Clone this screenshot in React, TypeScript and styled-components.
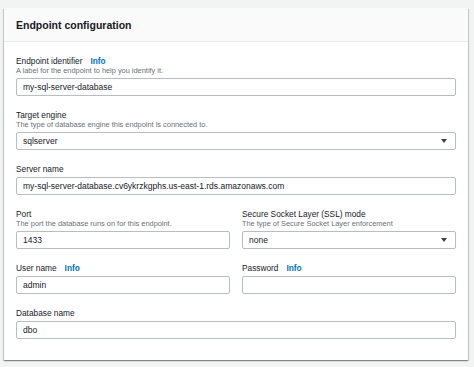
import React from "react";
import styled, { createGlobalStyle } from "styled-components";

const GlobalStyle = createGlobalStyle`
  html, body {
    margin: 0;
    padding: 0;
    background: #f2f3f3;
  }
  body {
    font-family: "Liberation Sans", Arial, sans-serif;
    color: #16191f;
  }
`;

const Page = styled.div`
  padding: 8px 6px 7px 4px;
  width: 474px;
  height: 367px;
  box-sizing: border-box;
`;

const Card = styled.section`
  background: #ffffff;
  box-shadow: 0 1px 1px 0 rgba(0, 28, 36, 0.3), 1px 1px 1px 0 rgba(0, 28, 36, 0.15),
    -1px 1px 1px 0 rgba(0, 28, 36, 0.15);
  height: 352px;
  display: flex;
  flex-direction: column;
`;

const CardHeader = styled.header`
  background: #fafafa;
  border-bottom: 1px solid #eaeded;
  height: 34px;
  box-sizing: border-box;
  padding: 0 12px;
  display: flex;
  align-items: center;
`;

const Title = styled.h2`
  margin: 0;
  font-size: 10.5px;
  font-weight: 700;
  color: #16191f;
`;

const CardBody = styled.div`
  padding: 14px 12px 0 12px;
  display: flex;
  flex-direction: column;
  gap: 14px;
`;

const Columns = styled.div`
  display: grid;
  grid-template-columns: 1fr 1fr;
  column-gap: 12px;
`;

const Field = styled.div`
  display: flex;
  flex-direction: column;
`;

const Label = styled.label`
  font-size: 8.3px;
  line-height: 10px;
  height: 10px;
  color: #16191f;
  display: flex;
  align-items: center;
`;

const InfoLink = styled.a`
  margin-left: 8px;
  font-weight: 700;
  color: #0073bb;
  text-decoration: none;
`;

const Description = styled.div`
  font-size: 7.4px;
  line-height: 9px;
  height: 9px;
  color: #687078;
`;

const InputBox = styled.div`
  margin-top: 3px;
  height: 18px;
  box-sizing: border-box;
  border: 1px solid #b4bfc0;
  border-radius: 2px;
  background: #ffffff;
  padding: 0 6px;
  display: flex;
  align-items: center;
  justify-content: space-between;
  font-size: 8.5px;
  color: #16191f;
  white-space: nowrap;
  overflow: hidden;
`;

const Caret = styled.span`
  width: 0;
  height: 0;
  margin-right: 2px;
  border-left: 3px solid transparent;
  border-right: 3px solid transparent;
  border-top: 4px solid #3b4048;
`;

type FieldProps = {
  label: string;
  info?: boolean;
  description?: string;
  value?: string;
  select?: boolean;
};

function FormField({ label, info, description, value, select }: FieldProps) {
  return (
    <Field>
      <Label>
        {label}
        {info && <InfoLink>Info</InfoLink>}
      </Label>
      {description && <Description>{description}</Description>}
      <InputBox>
        <span>{value}</span>
        {select && <Caret />}
      </InputBox>
    </Field>
  );
}

export default function App() {
  return (
    <Page>
      <GlobalStyle />
      <Card>
        <CardHeader>
          <Title>Endpoint configuration</Title>
        </CardHeader>
        <CardBody>
          <FormField
            label="Endpoint identifier"
            info
            description="A label for the endpoint to help you identify it."
            value="my-sql-server-database"
          />
          <FormField
            label="Target engine"
            description="The type of database engine this endpoint is connected to."
            value="sqlserver"
            select
          />
          <FormField
            label="Server name"
            value="my-sql-server-database.cv6ykrzkgphs.us-east-1.rds.amazonaws.com"
          />
          <Columns>
            <FormField
              label="Port"
              description="The port the database runs on for this endpoint."
              value="1433"
            />
            <FormField
              label="Secure Socket Layer (SSL) mode"
              description="The type of Secure Socket Layer enforcement"
              value="none"
              select
            />
          </Columns>
          <Columns>
            <FormField label="User name" info value="admin" />
            <FormField label="Password" info value="" />
          </Columns>
          <FormField label="Database name" value="dbo" />
        </CardBody>
      </Card>
    </Page>
  );
}
